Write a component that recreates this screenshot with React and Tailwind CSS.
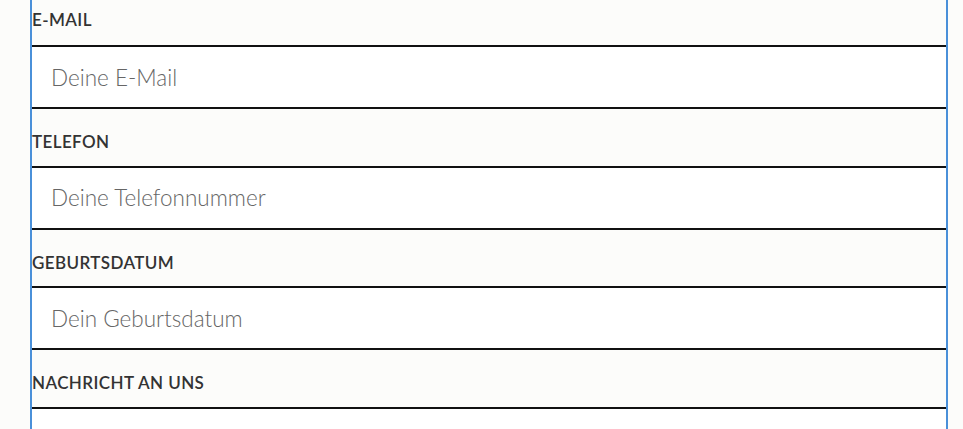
export default function App() {
  const fields = [
    ["E-MAIL", "Deine E-Mail"],
    ["TELEFON", "Deine Telefonnummer"],
    ["GEBURTSDATUM", "Dein Geburtsdatum"],
    ["NACHRICHT AN UNS", ""],
  ];
  return (
    <div className="h-[429px] overflow-hidden bg-[#fcfcfa]" style={{ fontFamily: "Lato, 'Noto Sans', sans-serif" }}>
      <div className="ml-[30px] w-[918px] h-[600px] -mt-[10px] border-x-2 border-[#4a90d9] bg-[#fcfcfa]">
        {fields.map(([label, ph], i) => (
          <div key={label} className="flex flex-col">
            <div className={(i === 0 ? "pt-[19px] pb-[14px]" : "pt-[22px] pb-[12.5px]") + " leading-[22px] text-[17px] font-semibold text-[#333] tracking-[0.4px]"}>
              {label}
            </div>
            <div className="h-[64px] bg-white border-y-2 border-[#111] flex items-center pl-[19px] pt-[1px] text-[22.5px] font-light text-[#666]">
              {ph}
            </div>
          </div>
        ))}
      </div>
    </div>
  );
}
